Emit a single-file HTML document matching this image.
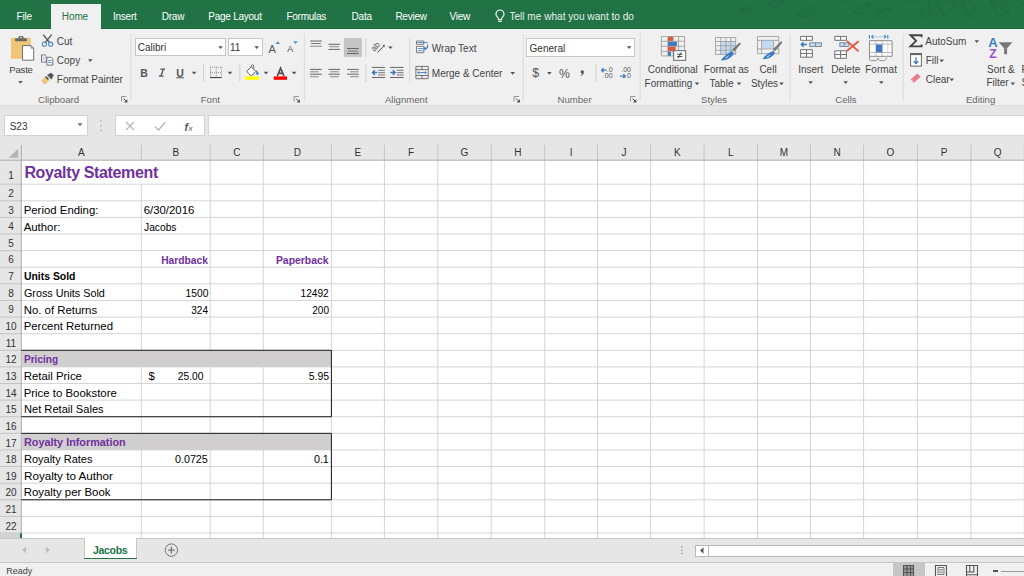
<!DOCTYPE html>
<html><head><meta charset="utf-8"><style>
html,body{margin:0;padding:0;width:1024px;height:576px;overflow:hidden;background:#fff;position:relative;font-family:"Liberation Sans", sans-serif;}
.t{position:absolute;white-space:pre;line-height:normal;font-family:"Liberation Sans", sans-serif;}
svg{overflow:visible;}
</style></head><body>
<div style="position:absolute;left:0.00px;top:0.00px;width:1024.00px;height:29.00px;background:#217346;"></div><div style="position:absolute;left:0.00px;top:28.00px;width:1024.00px;height:1.00px;background:#1a6a3d;"></div><div style="position:absolute;left:51.00px;top:4.00px;width:50.00px;height:25.00px;background:#f0f0f0;"></div><div class="t" style="left:16.60px;top:10.95px;font-size:10px;color:#ffffff;font-weight:400;letter-spacing:-0.25px;">File</div><div class="t" style="left:113.00px;top:10.95px;font-size:10px;color:#ffffff;font-weight:400;letter-spacing:-0.25px;">Insert</div><div class="t" style="left:161.80px;top:10.95px;font-size:10px;color:#ffffff;font-weight:400;letter-spacing:-0.25px;">Draw</div><div class="t" style="left:208.30px;top:10.95px;font-size:10px;color:#ffffff;font-weight:400;letter-spacing:-0.25px;">Page Layout</div><div class="t" style="left:286.40px;top:10.95px;font-size:10px;color:#ffffff;font-weight:400;letter-spacing:-0.25px;">Formulas</div><div class="t" style="left:351.60px;top:10.95px;font-size:10px;color:#ffffff;font-weight:400;letter-spacing:-0.25px;">Data</div><div class="t" style="left:395.40px;top:10.95px;font-size:10px;color:#ffffff;font-weight:400;letter-spacing:-0.25px;">Review</div><div class="t" style="left:449.60px;top:10.95px;font-size:10px;color:#ffffff;font-weight:400;letter-spacing:-0.25px;">View</div><div class="t" style="left:61.80px;top:10.95px;font-size:10px;color:#217346;font-weight:400;letter-spacing:-0.1px;">Home</div><svg style="position:absolute;left:494px;top:9px;" width="12" height="14" viewBox="0 0 12 14"><path d="M6 1a4 4 0 0 0-2.5 7.1c.6.5.9 1.1.9 1.8V10.6h3.2V9.9c0-.7.3-1.3.9-1.8A4 4 0 0 0 6 1z" fill="none" stroke="#e8efe9" stroke-width="1.2"/><path d="M4.2 12.4h3.6" stroke="#e8efe9" stroke-width="1.2"/></svg><div class="t" style="left:509.40px;top:10.86px;font-size:10.1px;color:#e8f0ea;font-weight:400;">Tell me what you want to do</div><svg style="position:absolute;left:700px;top:0px;" width="324" height="28" viewBox="0 0 324 28"><path d="M39.0 10.8 L47.3 6.3 L53.9 7.5 L46.4 13.3 L39.0 10.8 L53.9 7.5" fill="none" stroke="#1c6a3e" stroke-width="0.9" stroke-linejoin="round"/><path d="M67.2 4.2 L72.2 0.0 L85.5 0.8 L74.7 8.3 L67.2 4.2 L85.5 0.8" fill="none" stroke="#1c6a3e" stroke-width="0.9" stroke-linejoin="round"/><path d="M97.1 15.8 L106.2 5.0 L118.7 7.5 L109.6 17.4 L97.1 15.8 L118.7 7.5" fill="none" stroke="#1c6a3e" stroke-width="0.9" stroke-linejoin="round"/><path d="M153.4 12.7 L157.6 6.8 L170.4 3.4 L162.7 13.6 L153.4 12.7 L170.4 3.4" fill="none" stroke="#1c6a3e" stroke-width="0.9" stroke-linejoin="round"/><path d="M174.6 17.0 L177.2 11.0 L191.6 7.6 L185.7 17.8 L174.6 17.0 L191.6 7.6" fill="none" stroke="#1c6a3e" stroke-width="0.9" stroke-linejoin="round"/><path d="M204.4 2.5 L217.1 0.0" fill="none" stroke="#1c6a3e" stroke-width="0.9" stroke-linejoin="round"/><path d="M220.5 10.2 L228.2 0.0 L230.7 15.3 L223.0 17.8 L220.5 10.2 L230.7 15.3" fill="none" stroke="#1c6a3e" stroke-width="0.9" stroke-linejoin="round"/><path d="M235.0 0.0 L256.2 0.0 L252.8 8.5 L244.3 15.3 L238.4 6.8 L235.0 0.0 L244.3 15.3" fill="none" stroke="#1c6a3e" stroke-width="0.9" stroke-linejoin="round"/><path d="M261.3 0.0 L269.0 0.0 L274.9 10.2 L271.5 17.8 L263.9 11.9 L261.3 0.0 L271.5 17.8" fill="none" stroke="#1c6a3e" stroke-width="0.9" stroke-linejoin="round"/><path d="M290.2 0.0 L303.0 0.0 L309.7 14.4 L297.8 15.3 L290.2 0.0 L309.7 14.4" fill="none" stroke="#1c6a3e" stroke-width="0.9" stroke-linejoin="round"/><path d="M315.7 0.0 L324.0 5.0" fill="none" stroke="#1c6a3e" stroke-width="0.9" stroke-linejoin="round"/><path d="M142.0 0.0 L148.0 1.5" fill="none" stroke="#1c6a3e" stroke-width="0.9" stroke-linejoin="round"/></svg><div style="position:absolute;left:0.00px;top:29.00px;width:1024.00px;height:76.00px;background:#f0f0f0;"></div><div style="position:absolute;left:0.00px;top:105.00px;width:1024.00px;height:1.00px;background:#dcdcdc;"></div><div class="t" style="left:58.50px;transform:translateX(-50%);top:93.71px;font-size:9.6px;color:#666666;font-weight:400;">Clipboard</div><div class="t" style="left:210.30px;transform:translateX(-50%);top:93.71px;font-size:9.6px;color:#666666;font-weight:400;">Font</div><div class="t" style="left:406.30px;transform:translateX(-50%);top:93.71px;font-size:9.6px;color:#666666;font-weight:400;">Alignment</div><div class="t" style="left:574.60px;transform:translateX(-50%);top:93.71px;font-size:9.6px;color:#666666;font-weight:400;">Number</div><div class="t" style="left:714.10px;transform:translateX(-50%);top:93.71px;font-size:9.6px;color:#666666;font-weight:400;">Styles</div><div class="t" style="left:846.00px;transform:translateX(-50%);top:93.71px;font-size:9.6px;color:#666666;font-weight:400;">Cells</div><div class="t" style="left:980.60px;transform:translateX(-50%);top:93.71px;font-size:9.6px;color:#666666;font-weight:400;">Editing</div><div class="t" style="left:21.00px;transform:translateX(-50%);top:64.21px;font-size:9.6px;color:#444444;font-weight:400;letter-spacing:-0.2px;">Paste</div><div class="t" style="left:56.80px;top:35.75px;font-size:10px;color:#444444;font-weight:400;">Cut</div><div class="t" style="left:56.80px;top:55.45px;font-size:10px;color:#444444;font-weight:400;">Copy</div><div class="t" style="left:56.80px;top:74.25px;font-size:10px;color:#444444;font-weight:400;">Format Painter</div><div style="position:absolute;left:135.40px;top:38.10px;width:91.00px;height:18.30px;background:#fff;border:1px solid #c6c6c6;box-sizing:border-box;"></div><div style="position:absolute;left:227.80px;top:38.10px;width:35.00px;height:18.30px;background:#fff;border:1px solid #c6c6c6;box-sizing:border-box;"></div><div class="t" style="left:137.80px;top:42.45px;font-size:10px;color:#333;font-weight:400;">Calibri</div><div class="t" style="left:230.00px;top:42.45px;font-size:10px;color:#333;font-weight:400;">11</div><div class="t" style="left:268.50px;top:42.65px;font-size:11px;color:#555;font-weight:400;">A</div><div class="t" style="left:287.20px;top:44.45px;font-size:9px;color:#555;font-weight:400;">A</div><div class="t" style="left:140.30px;top:67.40px;font-size:10.5px;color:#555;font-weight:700;">B</div><div class="t" style="left:176.30px;top:66.80px;font-size:10.5px;color:#555;font-weight:700;">U</div><div class="t" style="left:431.80px;top:42.95px;font-size:10px;color:#444444;font-weight:400;">Wrap Text</div><div class="t" style="left:431.80px;top:68.15px;font-size:10px;color:#444444;font-weight:400;">Merge &amp; Center</div><div style="position:absolute;left:526.40px;top:38.40px;width:109.10px;height:18.40px;background:#fff;border:1px solid #c6c6c6;box-sizing:border-box;"></div><div class="t" style="left:529.60px;top:42.55px;font-size:10px;color:#333;font-weight:400;">General</div><div class="t" style="left:532.20px;top:66.29px;font-size:12.5px;color:#555;font-weight:400;">$</div><div class="t" style="left:558.90px;top:66.76px;font-size:12.2px;color:#555;font-weight:400;">%</div><div class="t" style="left:672.80px;transform:translateX(-50%);top:64.45px;font-size:10px;color:#444444;font-weight:400;">Conditional</div><div class="t" style="left:668.50px;transform:translateX(-50%);top:77.55px;font-size:10px;color:#444444;font-weight:400;">Formatting</div><div class="t" style="left:726.30px;transform:translateX(-50%);top:64.45px;font-size:10px;color:#444444;font-weight:400;">Format as</div><div class="t" style="left:721.50px;transform:translateX(-50%);top:77.55px;font-size:10px;color:#444444;font-weight:400;">Table</div><div class="t" style="left:768.00px;transform:translateX(-50%);top:64.45px;font-size:10px;color:#444444;font-weight:400;">Cell</div><div class="t" style="left:764.50px;transform:translateX(-50%);top:77.55px;font-size:10px;color:#444444;font-weight:400;">Styles</div><div class="t" style="left:810.70px;transform:translateX(-50%);top:64.25px;font-size:10px;color:#444444;font-weight:400;">Insert</div><div class="t" style="left:845.80px;transform:translateX(-50%);top:64.25px;font-size:10px;color:#444444;font-weight:400;">Delete</div><div class="t" style="left:881.10px;transform:translateX(-50%);top:64.25px;font-size:10px;color:#444444;font-weight:400;">Format</div><div class="t" style="left:925.30px;top:35.95px;font-size:10px;color:#444444;font-weight:400;">AutoSum</div><div class="t" style="left:925.70px;top:55.15px;font-size:10px;color:#444444;font-weight:400;">Fill</div><div class="t" style="left:925.70px;top:74.25px;font-size:10px;color:#444444;font-weight:400;">Clear</div><div class="t" style="left:988.30px;top:34.63px;font-size:13px;color:#3c7bc4;font-weight:700;">A</div><div class="t" style="left:989.20px;top:46.56px;font-size:12.2px;color:#9a53c9;font-weight:700;">Z</div><div class="t" style="left:1000.90px;transform:translateX(-50%);top:64.25px;font-size:10px;color:#444444;font-weight:400;">Sort &amp;</div><div class="t" style="left:997.50px;transform:translateX(-50%);top:77.45px;font-size:10px;color:#444444;font-weight:400;">Filter</div><div class="t" style="left:1021.50px;top:64.25px;font-size:10px;color:#444444;font-weight:400;">F</div><div class="t" style="left:1021.50px;top:77.45px;font-size:10px;color:#444444;font-weight:400;">S</div><svg style="position:absolute;left:0px;top:0px;pointer-events:none;" width="1024" height="576" viewBox="0 0 1024 576"><rect x="130.5" y="33.5" width="1" height="67.5" fill="#dadada"/><rect x="303.8" y="33.5" width="1" height="67.5" fill="#dadada"/><rect x="522.7" y="33.5" width="1" height="67.5" fill="#dadada"/><rect x="639.6" y="33.5" width="1" height="67.5" fill="#dadada"/><rect x="789.5" y="33.5" width="1" height="67.5" fill="#dadada"/><rect x="902.7" y="33.5" width="1" height="67.5" fill="#dadada"/><path d="M121.5 101.5V96.5H126.5" fill="none" stroke="#8a8a8a" stroke-width="0.9"/><path d="M123.6 98.6l3 3" stroke="#444" stroke-width="1"/><path d="M127.4 99.2v3.2h-3.2z" fill="#444"/><path d="M294.0 101.5V96.5H299.0" fill="none" stroke="#8a8a8a" stroke-width="0.9"/><path d="M296.1 98.6l3 3" stroke="#444" stroke-width="1"/><path d="M299.9 99.2v3.2h-3.2z" fill="#444"/><path d="M514.0 101.5V96.5H519.0" fill="none" stroke="#8a8a8a" stroke-width="0.9"/><path d="M516.1 98.6l3 3" stroke="#444" stroke-width="1"/><path d="M519.9 99.2v3.2h-3.2z" fill="#444"/><path d="M630.5 101.5V96.5H635.5" fill="none" stroke="#8a8a8a" stroke-width="0.9"/><path d="M632.6 98.6l3 3" stroke="#444" stroke-width="1"/><path d="M636.4 99.2v3.2h-3.2z" fill="#444"/><rect x="10.9" y="37.8" width="19.9" height="21" rx="1" fill="#efc57a"/><rect x="15" y="38.3" width="11.9" height="3" rx="0.8" fill="#6a6a6a"/><rect x="18.6" y="35.9" width="4.9" height="3.4" rx="1.2" fill="#6a6a6a"/><rect x="20.3" y="36.9" width="1.5" height="1.2" fill="#f0f0f0"/><path d="M22.5 45.6h8.6l2.6 2.6v12h-11.2z" fill="#fff" stroke="#6f6f6f" stroke-width="1"/><path d="M31.1 45.6v2.6h2.6" fill="none" stroke="#6f6f6f" stroke-width="0.8"/><path d="M18.2 81.1h4.6l-2.3 2.6z" fill="#555"/><path d="M43.2 34.6L49.6 42.6M51.6 34.6L45.2 42.6" stroke="#555" stroke-width="1.4" fill="none"/><circle cx="44.4" cy="44.2" r="2.1" fill="none" stroke="#4f8cc9" stroke-width="1.1"/><circle cx="50.7" cy="44.2" r="2.1" fill="none" stroke="#4f8cc9" stroke-width="1.1"/><path d="M41.5 54.9h3.6l1 1v6.2h-4.6z" fill="#fff" stroke="#666" stroke-width="0.9"/><path d="M46.9 57.3h4.3l1.7 1.7v6.1h-6z" fill="#fff" stroke="#666" stroke-width="0.9"/><path d="M42.6 57.2h1.6M42.6 59.2h1.6" stroke="#4f8cc9" stroke-width="0.9"/><path d="M48 60.4h3.6M48 62.4h3.6" stroke="#4f8cc9" stroke-width="0.9"/><path d="M88.0 59.3h4.6l-2.3 2.6z" fill="#555"/><path d="M41 80.8l4.9-4.6 3.6 3.7-4.6 4.8z" fill="#efc57a"/><path d="M47 75l4.2-2.3 2.6 2.6-2.4 4.2z" fill="#555"/><path d="M45.6 76.6l2.8 2.8" stroke="#555" stroke-width="1.6"/><path d="M218.29999999999998 46.3h4.6l-2.3 2.6z" fill="#555"/><path d="M254.39999999999998 46.3h4.6l-2.3 2.6z" fill="#555"/><path d="M275.5 44l2.3-2.8 2.3 2.8z" fill="#4f8cc9"/><path d="M293.2 41.2h4.6l-2.3 2.8z" fill="#4f8cc9"/><path d="M160.3 69.2h4.8M158.8 76.2h4.8M163.3 69.2l-2.4 7" fill="none" stroke="#555" stroke-width="1.3"/><rect x="176.3" y="77.3" width="7.6" height="1" fill="#555"/><path d="M191.79999999999998 71.8h4.6l-2.3 2.6z" fill="#555"/><rect x="203.2" y="64" width="1" height="17.599999999999994" fill="#d0d0d0"/><rect x="210" y="66.8" width="1" height="0.9" fill="#8a8a8a"/><rect x="212" y="66.8" width="1" height="0.9" fill="#8a8a8a"/><rect x="214" y="66.8" width="1" height="0.9" fill="#8a8a8a"/><rect x="216" y="66.8" width="1" height="0.9" fill="#8a8a8a"/><rect x="218" y="66.8" width="1" height="0.9" fill="#8a8a8a"/><rect x="220" y="66.8" width="1" height="0.9" fill="#8a8a8a"/><rect x="210" y="72.2" width="1" height="0.9" fill="#8a8a8a"/><rect x="212" y="72.2" width="1" height="0.9" fill="#8a8a8a"/><rect x="214" y="72.2" width="1" height="0.9" fill="#8a8a8a"/><rect x="216" y="72.2" width="1" height="0.9" fill="#8a8a8a"/><rect x="218" y="72.2" width="1" height="0.9" fill="#8a8a8a"/><rect x="220" y="72.2" width="1" height="0.9" fill="#8a8a8a"/><rect x="210" y="66.8" width="0.9" height="1" fill="#8a8a8a"/><rect x="210" y="68.8" width="0.9" height="1" fill="#8a8a8a"/><rect x="210" y="70.8" width="0.9" height="1" fill="#8a8a8a"/><rect x="210" y="72.8" width="0.9" height="1" fill="#8a8a8a"/><rect x="210" y="74.8" width="0.9" height="1" fill="#8a8a8a"/><rect x="210" y="76.8" width="0.9" height="1" fill="#8a8a8a"/><rect x="215.7" y="66.8" width="0.9" height="1" fill="#8a8a8a"/><rect x="215.7" y="68.8" width="0.9" height="1" fill="#8a8a8a"/><rect x="215.7" y="70.8" width="0.9" height="1" fill="#8a8a8a"/><rect x="215.7" y="72.8" width="0.9" height="1" fill="#8a8a8a"/><rect x="215.7" y="74.8" width="0.9" height="1" fill="#8a8a8a"/><rect x="215.7" y="76.8" width="0.9" height="1" fill="#8a8a8a"/><rect x="221" y="66.8" width="0.9" height="1" fill="#8a8a8a"/><rect x="221" y="68.8" width="0.9" height="1" fill="#8a8a8a"/><rect x="221" y="70.8" width="0.9" height="1" fill="#8a8a8a"/><rect x="221" y="72.8" width="0.9" height="1" fill="#8a8a8a"/><rect x="221" y="74.8" width="0.9" height="1" fill="#8a8a8a"/><rect x="221" y="76.8" width="0.9" height="1" fill="#8a8a8a"/><rect x="210" y="77" width="11.5" height="1.1" fill="#444"/><path d="M227.7 71.8h4.6l-2.3 2.6z" fill="#555"/><rect x="239.4" y="64.4" width="1" height="17.099999999999994" fill="#d0d0d0"/><path d="M251.3 66.8l4.6 4.6-4.6 4.6-4.6-4.6z" fill="#fff" stroke="#555" stroke-width="1"/><path d="M251.3 66.8v-0.8a1.2 1.2 0 0 1 2.4 0v3" fill="none" stroke="#555" stroke-width="0.8"/><path d="M256 70.2c1.6 1 2.8 2.4 2.6 3.6-.2 1.2-1.4 1.6-2.2.8z" fill="#3c7bc4"/><rect x="245" y="76.4" width="13.9" height="3.4" fill="#ffff00"/><path d="M263.7 71.8h4.6l-2.3 2.6z" fill="#555"/><path d="M277.3 76L280.6 68.2L283.9 76M278.5 73.4h4.2" fill="none" stroke="#505050" stroke-width="1.7"/><rect x="273.8" y="76.4" width="13.2" height="3.4" fill="#ff0000"/><path d="M291.8 71.8h4.6l-2.3 2.6z" fill="#555"/><rect x="310.1" y="40.5" width="11.699999999999989" height="1" fill="#666"/><rect x="311.1" y="43.0" width="9.699999999999989" height="1" fill="#777"/><rect x="310.1" y="45.7" width="11.699999999999989" height="1" fill="#888"/><rect x="328.5" y="43.8" width="11.5" height="1" fill="#666"/><rect x="329.5" y="46.2" width="9.5" height="1" fill="#888"/><rect x="328.5" y="48.9" width="11.5" height="1" fill="#666"/><rect x="343.9" y="38.1" width="18" height="18.8" fill="#c5c5c5"/><rect x="347" y="48.0" width="11.699999999999989" height="1" fill="#666"/><rect x="348" y="50.6" width="9.699999999999989" height="1" fill="#777"/><rect x="347" y="53.0" width="11.699999999999989" height="1" fill="#666"/><rect x="365.4" y="38.1" width="1" height="18.799999999999997" fill="#d0d0d0"/><text x="0" y="0" font-family="Liberation Sans" font-size="8.5" fill="#555" transform="translate(374.5 52) rotate(-50)">ab</text><path d="M377.5 52.4L384 45.9" stroke="#555" stroke-width="1"/><path d="M385 44.8l-2.6.8 1.8 1.8z" fill="#555"/><path d="M388.09999999999997 46.4h4.6l-2.3 2.6z" fill="#555"/><rect x="310.1" y="68.9" width="11.699999999999989" height="1" fill="#666"/><rect x="310.1" y="71.3" width="8.599999999999966" height="1" fill="#888"/><rect x="310.1" y="73.7" width="11.699999999999989" height="1" fill="#666"/><rect x="310.1" y="76.2" width="8.599999999999966" height="1" fill="#888"/><rect x="328.5" y="68.9" width="11.5" height="1" fill="#666"/><rect x="330" y="71.3" width="8.800000000000011" height="1" fill="#888"/><rect x="328.5" y="73.7" width="11.5" height="1" fill="#666"/><rect x="330" y="76.2" width="8.800000000000011" height="1" fill="#888"/><rect x="347" y="68.9" width="11.699999999999989" height="1" fill="#666"/><rect x="350" y="71.3" width="8.699999999999989" height="1" fill="#888"/><rect x="347" y="73.7" width="11.699999999999989" height="1" fill="#666"/><rect x="350" y="76.2" width="8.699999999999989" height="1" fill="#888"/><rect x="365.4" y="64.3" width="1" height="17.60000000000001" fill="#d0d0d0"/><rect x="371.9" y="66.9" width="13.100000000000023" height="1" fill="#666"/><rect x="378.2" y="69.8" width="6.800000000000011" height="1" fill="#777"/><rect x="378.2" y="72.2" width="6.800000000000011" height="1" fill="#777"/><rect x="378.2" y="74.5" width="6.800000000000011" height="1" fill="#777"/><rect x="371.9" y="77.0" width="13.100000000000023" height="1" fill="#666"/><path d="M372.5 72.6h4.6M374.8 70.3l-2.3 2.3 2.3 2.3" fill="none" stroke="#3c7bc4" stroke-width="1.5"/><rect x="390" y="66.9" width="13.600000000000023" height="1" fill="#666"/><rect x="396.7" y="69.8" width="6.900000000000034" height="1" fill="#777"/><rect x="396.7" y="72.2" width="6.900000000000034" height="1" fill="#777"/><rect x="396.7" y="74.5" width="6.900000000000034" height="1" fill="#777"/><rect x="390" y="77.0" width="13.600000000000023" height="1" fill="#666"/><path d="M390.3 72.6h4.6M392.8 70.3l2.3 2.3-2.3 2.3" fill="none" stroke="#3c7bc4" stroke-width="1.5"/><rect x="409.2" y="38" width="1" height="44.599999999999994" fill="#d6d6d6"/><path d="M416.5 41h7.3v3.3h-7.3zM416.5 46.4h7.3v6.3h-7.3z" fill="#fff" stroke="#707070" stroke-width="0.9"/><path d="M417.3 42.6h10.4M417.8 48.6h5M417.8 50.8h5" stroke="#3c7bc4" stroke-width="0.9"/><path d="M427.6 44.6v1.6c0 1.6-1 2.4-2.4 2.4h-0.8M425.6 47.2l-1.6 1.4 1.6 1.4" fill="none" stroke="#3c7bc4" stroke-width="1.1"/><path d="M415.9 66.4h12.3v12.3h-12.3zM415.9 69.6h12.3M415.9 75.5h12.3M422 66.4v3.2M422 75.5v3.2" fill="none" stroke="#666" stroke-width="0.9"/><path d="M417.8 72.6h8.5M419.2 71.2l-1.4 1.4 1.4 1.4M424.9 71.2l1.4 1.4-1.4 1.4" fill="none" stroke="#3c7bc4" stroke-width="0.9"/><path d="M510.40000000000003 72.1h4.6l-2.3 2.6z" fill="#555"/><path d="M626.9000000000001 46.3h4.6l-2.3 2.6z" fill="#555"/><path d="M547.1 72.1h4.6l-2.3 2.6z" fill="#555"/><path d="M582.2 70.2a1.7 1.7 0 0 1 1.7 1.9c-.1 1.8-1.2 3.2-3 4l-.4-.6c.9-.6 1.5-1.3 1.6-2.1a1.6 1.6 0 0 1 .1-3.2z" fill="#555"/><rect x="595.6" y="64" width="1" height="18" fill="#d0d0d0"/><path d="M601.6 70.2h5M603.6 68.2l-2 2 2 2" fill="none" stroke="#3c7bc4" stroke-width="1.3"/><text x="606.8" y="72" font-family="Liberation Sans" font-size="7" fill="#555">.0</text><text x="602.8" y="78" font-family="Liberation Sans" font-size="7" fill="#555">.00</text><text x="621.2" y="72" font-family="Liberation Sans" font-size="7" fill="#555">.00</text><text x="625.1" y="78" font-family="Liberation Sans" font-size="7" fill="#555">.0</text><path d="M620 76.1h5M623.2 74.1l2 2-2 2" fill="none" stroke="#3c7bc4" stroke-width="1.3"/><rect x="668" y="36.6" width="4.8" height="4" fill="#e0573a"/><rect x="668" y="41.9" width="8.8" height="3.9" fill="#3c7bc4"/><rect x="668" y="46.8" width="7.4" height="3.9" fill="#e0573a"/><rect x="668" y="51.8" width="2.8" height="3.9" fill="#3c7bc4"/><path d="M661.4 36.5h23.2v19.4h-23.2zM661.4 41.3h23.2M661.4 46.3h23.2M661.4 51.3h23.2M667.9 36.5v19.4M673.2 36.5v19.4M678.5 36.5v19.4" fill="none" stroke="#a0a0a0" stroke-width="0.9"/><rect x="668" y="36.9" width="4.8" height="3.9" fill="#e0573a"/><rect x="668" y="41.8" width="8.8" height="4" fill="#3c7bc4"/><rect x="668" y="46.8" width="7.4" height="4" fill="#e0573a"/><rect x="668" y="51.8" width="2.8" height="3.8" fill="#3c7bc4"/><rect x="673.7" y="50.7" width="12" height="9.6" fill="#fff" stroke="#666" stroke-width="1"/><path d="M677 54.2h5.4M677 56.6h5.4M681.2 52.6l-3 5.6" stroke="#333" stroke-width="0.9"/><path d="M694.7 82.6h4.6l-2.3 2.6z" fill="#555"/><rect x="720.7" y="41.5" width="15" height="12.9" fill="#c5d9f0"/><path d="M715.5 37.5h20.2v16.9h-20.2zM715.5 41.5h20.2M715.5 45.8h20.2M715.5 50.2h20.2M720.7 37.5v16.9M725.9 37.5v16.9M730.8 37.5v16.9" fill="none" stroke="#a0a0a0" stroke-width="0.9"/><path d="M739.6 42.4l1.4 1.4-6.8 7.6-2-2z" fill="#777"/><path d="M732 51.2c-3 1-8 4.5-11.2 9.3 4.5.4 10.2-1.6 13-6.9z" fill="#3c7bc4"/><path d="M728.6 55.6c-.8 1.2-1.8 2-3 2.4" stroke="#fff" stroke-width="0.8" fill="none"/><path d="M736.7 82.6h4.6l-2.3 2.6z" fill="#555"/><rect x="761.8" y="40.6" width="11.2" height="7.9" fill="#c5d9f0"/><path d="M757.5 36.5h21.3v17.1h-21.3zM757.5 40.4h21.3M757.5 48.9h21.3M761.6 40.4v13.2M773.6 40.4v13.2" fill="none" stroke="#a0a0a0" stroke-width="0.9"/><path d="M781 41.2l1.4 1.4-7.4 8.6-2-2z" fill="#777"/><path d="M773.2 51c-3 1-7.6 3.6-10.8 8 4.5.4 9.8-1.2 12.6-6z" fill="#3c7bc4"/><path d="M770 54.8c-.8 1.2-1.8 2-3 2.4" stroke="#fff" stroke-width="0.8" fill="none"/><path d="M779.2 82.6h4.6l-2.3 2.6z" fill="#555"/><path d="M800.6 36.4h11.799999999999955v3.8999999999999986h-11.799999999999955zM806.5 36.4v3.8999999999999986" fill="#fff" stroke="#707070" stroke-width="1"/><path d="M809.7 42.8h11.699999999999932v3.700000000000003h-11.699999999999932zM815.55 42.8v3.700000000000003" fill="#c5d9f0" stroke="#7a8a9a" stroke-width="1"/><path d="M801.4 44.6h5.6M803.6 42.4l-2.2 2.2 2.2 2.2" fill="none" stroke="#3c7bc4" stroke-width="1.5"/><path d="M800.6 49.7h11.799999999999955v7.5h-11.799999999999955zM806.5 49.7v7.5M800.6 53.45h11.799999999999955" fill="#fff" stroke="#707070" stroke-width="1"/><path d="M808.4000000000001 81.3h4.6l-2.3 2.6z" fill="#555"/><path d="M834.8 36.4h11.600000000000023v3.8999999999999986h-11.600000000000023zM840.5999999999999 36.4v3.8999999999999986" fill="#fff" stroke="#707070" stroke-width="1"/><path d="M839.8 42.8h9v3.7h-9zM844.3 42.8v3.7" fill="#c5d9f0" stroke="#7a8a9a" stroke-width="1"/><path d="M834.8 50.8h11.600000000000023v7.5h-11.600000000000023zM840.5999999999999 50.8v7.5M834.8 54.55h11.600000000000023" fill="#fff" stroke="#707070" stroke-width="1"/><path d="M846.8 40.8l11.8 10.6M858.6 41.2l-11.8 9.8" stroke="#e0573a" stroke-width="1.8"/><path d="M843.4000000000001 81.3h4.6l-2.3 2.6z" fill="#555"/><path d="M869.4 35v3.7M887.8 35v3.7" stroke="#3c7bc4" stroke-width="1"/><path d="M871.5 36.8h14.5" stroke="#a9c4e4" stroke-width="1"/><path d="M873.4 35.2l-1.6 1.6 1.6 1.6M884.2 35.2l1.6 1.6-1.6 1.6" fill="none" stroke="#3c7bc4" stroke-width="1.1"/><path d="M869.5 40.7h22.6v15.6h-22.6z" fill="#fff" stroke="#8a8a8a" stroke-width="1"/><path d="M869.5 44.1h22.6M869.5 52.5h22.6M876 40.7v15.6M882.2 40.7v15.6" stroke="#b0b0b0" stroke-width="0.9"/><path d="M887.8 40.7v15.6" stroke="#d0d0d0" stroke-width="0.9"/><rect x="876" y="44.5" width="6.2" height="7.8" fill="#3c7bc4"/><path d="M869.5 56.3v3c0 1 1 1.3 2 1.3h4.5c1 0 1.5-1 2-2.5M878 58c.5 1.5 1 2.6 2 2.6h4.5c1 0 1.5-1 2-2.8" fill="none" stroke="#8a8a8a" stroke-width="0.9"/><path d="M879.0 81.3h4.6l-2.3 2.6z" fill="#555"/><path d="M921.6 37.2V35.2H910.5l5.6 5.6-5.6 5.6h11.1v-2" fill="none" stroke="#444" stroke-width="1.9" stroke-linejoin="miter"/><path d="M974.5 40.3h4.6l-2.3 2.6z" fill="#555"/><rect x="910.6" y="53.6" width="10.8" height="12.5" fill="#fff" stroke="#666" stroke-width="1"/><rect x="910.1" y="53.1" width="11.8" height="2" fill="#666"/><path d="M916 57.3v6.3M913.7 61.2l2.3 2.4 2.3-2.4" fill="none" stroke="#3c7bc4" stroke-width="1.3"/><path d="M939.4000000000001 59.599999999999994h4.6l-2.3 2.6z" fill="#555"/><path d="M910.6 79.4l6.6-6 3.4 3.3-6.6 6z" fill="#e57c8f"/><path d="M912.4 81.2l1.6-1.5" stroke="#f6d3da" stroke-width="1"/><path d="M949.5 78.6h4.6l-2.3 2.6z" fill="#555"/><path d="M998.7 42.3h13.7l-5.3 6v6h-3v-6z" fill="#777"/><path d="M1010.5 82.6h4.6l-2.3 2.6z" fill="#555"/></svg><div style="position:absolute;left:0.00px;top:106.00px;width:1024.00px;height:38.80px;background:#e6e6e6;"></div><div style="position:absolute;left:4.30px;top:115.40px;width:84.20px;height:20.40px;background:#fff;border:1px solid #d2d2d2;box-sizing:border-box;"></div><div class="t" style="left:9.70px;top:121.45px;font-size:10px;color:#333;font-weight:400;">S23</div><svg style="position:absolute;left:77px;top:123px;" width="6" height="4" viewBox="0 0 6 4"><path d="M0.5 0.3h5l-2.5 2.8z" fill="#666"/></svg><svg style="position:absolute;left:100px;top:119.5px;" width="3" height="13" viewBox="0 0 3 13"><rect x="0.5" y="0.5" width="1.2" height="1.2" fill="#999"/><rect x="0.5" y="5.2" width="1.2" height="1.2" fill="#999"/><rect x="0.5" y="9.9" width="1.2" height="1.2" fill="#999"/></svg><div style="position:absolute;left:114.50px;top:115.40px;width:90.70px;height:20.40px;background:#fff;border:1px solid #d2d2d2;box-sizing:border-box;"></div><svg style="position:absolute;left:125px;top:120.5px;" width="10" height="10" viewBox="0 0 10 10"><path d="M1 1l8 8M9 1l-8 8" stroke="#b3b3b3" stroke-width="1.1"/></svg><svg style="position:absolute;left:154px;top:120.5px;" width="12" height="10" viewBox="0 0 12 10"><path d="M1 5.5l3.5 3.5L11 1.5" fill="none" stroke="#b3b3b3" stroke-width="1.2"/></svg><div class="t" style="left:184.50px;top:120.50px;font-size:10.5px;color:#555;font-weight:700;font-style:italic;font-family:"Liberation Serif",serif;">f</div><div class="t" style="left:188.50px;top:123.76px;font-size:8px;color:#555;font-weight:400;font-style:italic;font-family:"Liberation Serif",serif;">x</div><div style="position:absolute;left:208.40px;top:115.40px;width:830.00px;height:20.40px;background:#fff;border:1px solid #d6d6d6;box-sizing:border-box;"></div><div style="position:absolute;left:0.00px;top:144.80px;width:1024.00px;height:15.40px;background:#e6e6e6;"></div><div style="position:absolute;left:0.00px;top:160.20px;width:21.30px;height:378.30px;background:#e6e6e6;"></div><div style="position:absolute;left:21.30px;top:160.20px;width:1002.70px;height:378.30px;background:#fff;"></div><svg style="position:absolute;left:0px;top:0px;pointer-events:none;" width="1024" height="576" viewBox="0 0 1024 576"><line x1="141.3" y1="184.2" x2="141.3" y2="538.5" stroke="#d5d5d5" stroke-width="1"/><line x1="210.2" y1="160.2" x2="210.2" y2="538.5" stroke="#d5d5d5" stroke-width="1"/><line x1="263.3" y1="160.2" x2="263.3" y2="538.5" stroke="#d5d5d5" stroke-width="1"/><line x1="331.4" y1="160.2" x2="331.4" y2="538.5" stroke="#d5d5d5" stroke-width="1"/><line x1="384.4" y1="160.2" x2="384.4" y2="538.5" stroke="#d5d5d5" stroke-width="1"/><line x1="437.8" y1="160.2" x2="437.8" y2="538.5" stroke="#d5d5d5" stroke-width="1"/><line x1="491.2" y1="160.2" x2="491.2" y2="538.5" stroke="#d5d5d5" stroke-width="1"/><line x1="544.7" y1="160.2" x2="544.7" y2="538.5" stroke="#d5d5d5" stroke-width="1"/><line x1="597.5" y1="160.2" x2="597.5" y2="538.5" stroke="#d5d5d5" stroke-width="1"/><line x1="650.6" y1="160.2" x2="650.6" y2="538.5" stroke="#d5d5d5" stroke-width="1"/><line x1="704.1" y1="160.2" x2="704.1" y2="538.5" stroke="#d5d5d5" stroke-width="1"/><line x1="757.6" y1="160.2" x2="757.6" y2="538.5" stroke="#d5d5d5" stroke-width="1"/><line x1="810.4" y1="160.2" x2="810.4" y2="538.5" stroke="#d5d5d5" stroke-width="1"/><line x1="863.6" y1="160.2" x2="863.6" y2="538.5" stroke="#d5d5d5" stroke-width="1"/><line x1="917.4" y1="160.2" x2="917.4" y2="538.5" stroke="#d5d5d5" stroke-width="1"/><line x1="970.9" y1="160.2" x2="970.9" y2="538.5" stroke="#d5d5d5" stroke-width="1"/><line x1="1024.3" y1="160.2" x2="1024.3" y2="538.5" stroke="#d5d5d5" stroke-width="1"/><line x1="21.3" y1="184.2" x2="1024" y2="184.2" stroke="#d5d5d5" stroke-width="1"/><line x1="21.3" y1="200.81" x2="1024" y2="200.81" stroke="#d5d5d5" stroke-width="1"/><line x1="21.3" y1="217.42" x2="1024" y2="217.42" stroke="#d5d5d5" stroke-width="1"/><line x1="21.3" y1="234.02999999999997" x2="1024" y2="234.02999999999997" stroke="#d5d5d5" stroke-width="1"/><line x1="21.3" y1="250.64" x2="1024" y2="250.64" stroke="#d5d5d5" stroke-width="1"/><line x1="21.3" y1="267.25" x2="1024" y2="267.25" stroke="#d5d5d5" stroke-width="1"/><line x1="21.3" y1="283.86" x2="1024" y2="283.86" stroke="#d5d5d5" stroke-width="1"/><line x1="21.3" y1="300.46999999999997" x2="1024" y2="300.46999999999997" stroke="#d5d5d5" stroke-width="1"/><line x1="21.3" y1="317.08" x2="1024" y2="317.08" stroke="#d5d5d5" stroke-width="1"/><line x1="21.3" y1="333.69" x2="1024" y2="333.69" stroke="#d5d5d5" stroke-width="1"/><line x1="21.3" y1="350.29999999999995" x2="1024" y2="350.29999999999995" stroke="#d5d5d5" stroke-width="1"/><line x1="21.3" y1="366.90999999999997" x2="1024" y2="366.90999999999997" stroke="#d5d5d5" stroke-width="1"/><line x1="21.3" y1="383.52" x2="1024" y2="383.52" stroke="#d5d5d5" stroke-width="1"/><line x1="21.3" y1="400.13" x2="1024" y2="400.13" stroke="#d5d5d5" stroke-width="1"/><line x1="21.3" y1="416.74" x2="1024" y2="416.74" stroke="#d5d5d5" stroke-width="1"/><line x1="21.3" y1="433.34999999999997" x2="1024" y2="433.34999999999997" stroke="#d5d5d5" stroke-width="1"/><line x1="21.3" y1="449.96" x2="1024" y2="449.96" stroke="#d5d5d5" stroke-width="1"/><line x1="21.3" y1="466.57" x2="1024" y2="466.57" stroke="#d5d5d5" stroke-width="1"/><line x1="21.3" y1="483.18" x2="1024" y2="483.18" stroke="#d5d5d5" stroke-width="1"/><line x1="21.3" y1="499.78999999999996" x2="1024" y2="499.78999999999996" stroke="#d5d5d5" stroke-width="1"/><line x1="21.3" y1="516.4" x2="1024" y2="516.4" stroke="#d5d5d5" stroke-width="1"/><line x1="21.3" y1="533.01" x2="1024" y2="533.01" stroke="#d5d5d5" stroke-width="1"/><line x1="141.3" y1="144.8" x2="141.3" y2="160.2" stroke="#c4c4c4" stroke-width="1"/><line x1="210.2" y1="144.8" x2="210.2" y2="160.2" stroke="#c4c4c4" stroke-width="1"/><line x1="263.3" y1="144.8" x2="263.3" y2="160.2" stroke="#c4c4c4" stroke-width="1"/><line x1="331.4" y1="144.8" x2="331.4" y2="160.2" stroke="#c4c4c4" stroke-width="1"/><line x1="384.4" y1="144.8" x2="384.4" y2="160.2" stroke="#c4c4c4" stroke-width="1"/><line x1="437.8" y1="144.8" x2="437.8" y2="160.2" stroke="#c4c4c4" stroke-width="1"/><line x1="491.2" y1="144.8" x2="491.2" y2="160.2" stroke="#c4c4c4" stroke-width="1"/><line x1="544.7" y1="144.8" x2="544.7" y2="160.2" stroke="#c4c4c4" stroke-width="1"/><line x1="597.5" y1="144.8" x2="597.5" y2="160.2" stroke="#c4c4c4" stroke-width="1"/><line x1="650.6" y1="144.8" x2="650.6" y2="160.2" stroke="#c4c4c4" stroke-width="1"/><line x1="704.1" y1="144.8" x2="704.1" y2="160.2" stroke="#c4c4c4" stroke-width="1"/><line x1="757.6" y1="144.8" x2="757.6" y2="160.2" stroke="#c4c4c4" stroke-width="1"/><line x1="810.4" y1="144.8" x2="810.4" y2="160.2" stroke="#c4c4c4" stroke-width="1"/><line x1="863.6" y1="144.8" x2="863.6" y2="160.2" stroke="#c4c4c4" stroke-width="1"/><line x1="917.4" y1="144.8" x2="917.4" y2="160.2" stroke="#c4c4c4" stroke-width="1"/><line x1="970.9" y1="144.8" x2="970.9" y2="160.2" stroke="#c4c4c4" stroke-width="1"/><line x1="1024.3" y1="144.8" x2="1024.3" y2="160.2" stroke="#c4c4c4" stroke-width="1"/><line x1="0" y1="184.2" x2="21.3" y2="184.2" stroke="#c4c4c4" stroke-width="1"/><line x1="0" y1="200.81" x2="21.3" y2="200.81" stroke="#c4c4c4" stroke-width="1"/><line x1="0" y1="217.42" x2="21.3" y2="217.42" stroke="#c4c4c4" stroke-width="1"/><line x1="0" y1="234.02999999999997" x2="21.3" y2="234.02999999999997" stroke="#c4c4c4" stroke-width="1"/><line x1="0" y1="250.64" x2="21.3" y2="250.64" stroke="#c4c4c4" stroke-width="1"/><line x1="0" y1="267.25" x2="21.3" y2="267.25" stroke="#c4c4c4" stroke-width="1"/><line x1="0" y1="283.86" x2="21.3" y2="283.86" stroke="#c4c4c4" stroke-width="1"/><line x1="0" y1="300.46999999999997" x2="21.3" y2="300.46999999999997" stroke="#c4c4c4" stroke-width="1"/><line x1="0" y1="317.08" x2="21.3" y2="317.08" stroke="#c4c4c4" stroke-width="1"/><line x1="0" y1="333.69" x2="21.3" y2="333.69" stroke="#c4c4c4" stroke-width="1"/><line x1="0" y1="350.29999999999995" x2="21.3" y2="350.29999999999995" stroke="#c4c4c4" stroke-width="1"/><line x1="0" y1="366.90999999999997" x2="21.3" y2="366.90999999999997" stroke="#c4c4c4" stroke-width="1"/><line x1="0" y1="383.52" x2="21.3" y2="383.52" stroke="#c4c4c4" stroke-width="1"/><line x1="0" y1="400.13" x2="21.3" y2="400.13" stroke="#c4c4c4" stroke-width="1"/><line x1="0" y1="416.74" x2="21.3" y2="416.74" stroke="#c4c4c4" stroke-width="1"/><line x1="0" y1="433.34999999999997" x2="21.3" y2="433.34999999999997" stroke="#c4c4c4" stroke-width="1"/><line x1="0" y1="449.96" x2="21.3" y2="449.96" stroke="#c4c4c4" stroke-width="1"/><line x1="0" y1="466.57" x2="21.3" y2="466.57" stroke="#c4c4c4" stroke-width="1"/><line x1="0" y1="483.18" x2="21.3" y2="483.18" stroke="#c4c4c4" stroke-width="1"/><line x1="0" y1="499.78999999999996" x2="21.3" y2="499.78999999999996" stroke="#c4c4c4" stroke-width="1"/><line x1="0" y1="516.4" x2="21.3" y2="516.4" stroke="#c4c4c4" stroke-width="1"/><line x1="0" y1="533.01" x2="21.3" y2="533.01" stroke="#c4c4c4" stroke-width="1"/><line x1="0" y1="160.2" x2="1024" y2="160.2" stroke="#ababab" stroke-width="1"/><line x1="21.3" y1="144.8" x2="21.3" y2="538.5" stroke="#ababab" stroke-width="1"/><path d="M8.6 157.7L18.3 148.7V157.7z" fill="#b4b4b4"/><rect x="21.8" y="350.79999999999995" width="309.09999999999997" height="16.110000000000014" fill="#d0cece"/><rect x="21.8" y="433.84999999999997" width="309.09999999999997" height="16.110000000000014" fill="#d0cece"/><path d="M21.3 350.29999999999995H331.4V416.74H21.3" fill="none" stroke="#1a1a1a" stroke-width="1"/><path d="M21.3 433.34999999999997H331.4V499.78999999999996H21.3" fill="none" stroke="#1a1a1a" stroke-width="1"/><rect x="0" y="533.51" width="20" height="4.990000000000009" fill="#d2d2d2"/><rect x="20" y="533.31" width="2" height="5.190000000000009" fill="#217346"/></svg><div class="t" style="left:81.30px;transform:translateX(-50%);top:146.95px;font-size:10px;color:#333;font-weight:400;">A</div><div class="t" style="left:175.75px;transform:translateX(-50%);top:146.95px;font-size:10px;color:#333;font-weight:400;">B</div><div class="t" style="left:236.75px;transform:translateX(-50%);top:146.95px;font-size:10px;color:#333;font-weight:400;">C</div><div class="t" style="left:297.35px;transform:translateX(-50%);top:146.95px;font-size:10px;color:#333;font-weight:400;">D</div><div class="t" style="left:357.90px;transform:translateX(-50%);top:146.95px;font-size:10px;color:#333;font-weight:400;">E</div><div class="t" style="left:411.10px;transform:translateX(-50%);top:146.95px;font-size:10px;color:#333;font-weight:400;">F</div><div class="t" style="left:464.50px;transform:translateX(-50%);top:146.95px;font-size:10px;color:#333;font-weight:400;">G</div><div class="t" style="left:517.95px;transform:translateX(-50%);top:146.95px;font-size:10px;color:#333;font-weight:400;">H</div><div class="t" style="left:571.10px;transform:translateX(-50%);top:146.95px;font-size:10px;color:#333;font-weight:400;">I</div><div class="t" style="left:624.05px;transform:translateX(-50%);top:146.95px;font-size:10px;color:#333;font-weight:400;">J</div><div class="t" style="left:677.35px;transform:translateX(-50%);top:146.95px;font-size:10px;color:#333;font-weight:400;">K</div><div class="t" style="left:730.85px;transform:translateX(-50%);top:146.95px;font-size:10px;color:#333;font-weight:400;">L</div><div class="t" style="left:784.00px;transform:translateX(-50%);top:146.95px;font-size:10px;color:#333;font-weight:400;">M</div><div class="t" style="left:837.00px;transform:translateX(-50%);top:146.95px;font-size:10px;color:#333;font-weight:400;">N</div><div class="t" style="left:890.50px;transform:translateX(-50%);top:146.95px;font-size:10px;color:#333;font-weight:400;">O</div><div class="t" style="left:944.15px;transform:translateX(-50%);top:146.95px;font-size:10px;color:#333;font-weight:400;">P</div><div class="t" style="left:997.60px;transform:translateX(-50%);top:146.95px;font-size:10px;color:#333;font-weight:400;">Q</div><div class="t" style="left:11.00px;transform:translateX(-50%);top:169.55px;font-size:10px;color:#333;font-weight:400;">1</div><div class="t" style="left:11.00px;transform:translateX(-50%);top:188.00px;font-size:10px;color:#333;font-weight:400;">2</div><div class="t" style="left:11.00px;transform:translateX(-50%);top:205.00px;font-size:10px;color:#333;font-weight:400;">3</div><div class="t" style="left:11.00px;transform:translateX(-50%);top:221.00px;font-size:10px;color:#333;font-weight:400;">4</div><div class="t" style="left:11.00px;transform:translateX(-50%);top:238.00px;font-size:10px;color:#333;font-weight:400;">5</div><div class="t" style="left:11.00px;transform:translateX(-50%);top:254.00px;font-size:10px;color:#333;font-weight:400;">6</div><div class="t" style="left:11.00px;transform:translateX(-50%);top:271.00px;font-size:10px;color:#333;font-weight:400;">7</div><div class="t" style="left:11.00px;transform:translateX(-50%);top:288.00px;font-size:10px;color:#333;font-weight:400;">8</div><div class="t" style="left:11.00px;transform:translateX(-50%);top:304.00px;font-size:10px;color:#333;font-weight:400;">9</div><div class="t" style="left:11.00px;transform:translateX(-50%);top:321.00px;font-size:10px;color:#333;font-weight:400;">10</div><div class="t" style="left:11.00px;transform:translateX(-50%);top:338.00px;font-size:10px;color:#333;font-weight:400;">11</div><div class="t" style="left:11.00px;transform:translateX(-50%);top:354.00px;font-size:10px;color:#333;font-weight:400;">12</div><div class="t" style="left:11.00px;transform:translateX(-50%);top:371.00px;font-size:10px;color:#333;font-weight:400;">13</div><div class="t" style="left:11.00px;transform:translateX(-50%);top:388.00px;font-size:10px;color:#333;font-weight:400;">14</div><div class="t" style="left:11.00px;transform:translateX(-50%);top:404.00px;font-size:10px;color:#333;font-weight:400;">15</div><div class="t" style="left:11.00px;transform:translateX(-50%);top:421.00px;font-size:10px;color:#333;font-weight:400;">16</div><div class="t" style="left:11.00px;transform:translateX(-50%);top:438.00px;font-size:10px;color:#333;font-weight:400;">17</div><div class="t" style="left:11.00px;transform:translateX(-50%);top:454.00px;font-size:10px;color:#333;font-weight:400;">18</div><div class="t" style="left:11.00px;transform:translateX(-50%);top:471.00px;font-size:10px;color:#333;font-weight:400;">19</div><div class="t" style="left:11.00px;transform:translateX(-50%);top:487.00px;font-size:10px;color:#333;font-weight:400;">20</div><div class="t" style="left:11.00px;transform:translateX(-50%);top:504.00px;font-size:10px;color:#333;font-weight:400;">21</div><div class="t" style="left:11.00px;transform:translateX(-50%);top:521.00px;font-size:10px;color:#333;font-weight:400;">22</div><div class="t" style="left:24.40px;top:164.12px;font-size:16px;color:#7030a0;font-weight:700;letter-spacing:-0.36px;">Royalty Statement</div><div class="t" style="left:23.70px;top:204.00px;font-size:11.4px;color:#000;font-weight:400;">Period Ending:</div><div class="t" style="left:23.70px;top:221.00px;font-size:11.4px;color:#000;font-weight:400;">Author:</div><div class="t" style="left:143.70px;top:204.00px;font-size:11.4px;color:#000;font-weight:400;">6/30/2016</div><div class="t" style="left:143.70px;top:221.00px;font-size:11.4px;color:#000;font-weight:400;transform:scaleX(0.9);transform-origin:left center;">Jacobs</div><div class="t" style="right:816.10px;top:254.00px;font-size:11.4px;color:#7030a0;font-weight:700;transform:scaleX(0.9);transform-origin:right center;">Hardback</div><div class="t" style="right:694.90px;top:254.00px;font-size:11.4px;color:#7030a0;font-weight:700;transform:scaleX(0.915);transform-origin:right center;">Paperback</div><div class="t" style="left:23.70px;top:270.00px;font-size:11.4px;color:#000;font-weight:700;transform:scaleX(0.913);transform-origin:left center;">Units Sold</div><div class="t" style="left:23.70px;top:287.00px;font-size:11.4px;color:#000;font-weight:400;transform:scaleX(0.945);transform-origin:left center;">Gross Units Sold</div><div class="t" style="right:816.10px;top:287.00px;font-size:11.4px;color:#000;font-weight:400;transform:scaleX(0.901);transform-origin:right center;">1500</div><div class="t" style="right:694.90px;top:287.00px;font-size:11.4px;color:#000;font-weight:400;transform:scaleX(0.886);transform-origin:right center;">12492</div><div class="t" style="left:23.70px;top:304.00px;font-size:11.4px;color:#000;font-weight:400;">No. of Returns</div><div class="t" style="right:816.10px;top:304.00px;font-size:11.4px;color:#000;font-weight:400;transform:scaleX(0.879);transform-origin:right center;">324</div><div class="t" style="right:694.90px;top:304.00px;font-size:11.4px;color:#000;font-weight:400;transform:scaleX(0.879);transform-origin:right center;">200</div><div class="t" style="left:23.70px;top:320.00px;font-size:11.4px;color:#000;font-weight:400;">Percent Returned</div><div class="t" style="left:23.70px;top:353.00px;font-size:11.4px;color:#7030a0;font-weight:700;transform:scaleX(0.881);transform-origin:left center;">Pricing</div><div class="t" style="left:23.70px;top:370.00px;font-size:11.4px;color:#000;font-weight:400;">Retail Price</div><div class="t" style="left:148.50px;top:370.00px;font-size:11.4px;color:#000;font-weight:400;">$</div><div class="t" style="right:820.40px;top:370.00px;font-size:11.4px;color:#000;font-weight:400;transform:scaleX(0.905);transform-origin:right center;">25.00</div><div class="t" style="right:694.90px;top:370.00px;font-size:11.4px;color:#000;font-weight:400;transform:scaleX(0.923);transform-origin:right center;">5.95</div><div class="t" style="left:23.70px;top:387.00px;font-size:11.4px;color:#000;font-weight:400;">Price to Bookstore</div><div class="t" style="left:23.70px;top:403.00px;font-size:11.4px;color:#000;font-weight:400;transform:scaleX(0.975);transform-origin:left center;">Net Retail Sales</div><div class="t" style="left:23.70px;top:436.00px;font-size:11.4px;color:#7030a0;font-weight:700;transform:scaleX(0.951);transform-origin:left center;">Royalty Information</div><div class="t" style="left:23.70px;top:453.00px;font-size:11.4px;color:#000;font-weight:400;transform:scaleX(0.965);transform-origin:left center;">Royalty Rates</div><div class="t" style="right:816.10px;top:453.00px;font-size:11.4px;color:#000;font-weight:400;transform:scaleX(0.945);transform-origin:right center;">0.0725</div><div class="t" style="right:694.90px;top:453.00px;font-size:11.4px;color:#000;font-weight:400;transform:scaleX(0.943);transform-origin:right center;">0.1</div><div class="t" style="left:23.70px;top:470.00px;font-size:11.4px;color:#000;font-weight:400;transform:scaleX(1.025);transform-origin:left center;">Royalty to Author</div><div class="t" style="left:23.70px;top:486.00px;font-size:11.4px;color:#000;font-weight:400;">Royalty per Book</div><div style="position:absolute;left:0.00px;top:538.50px;width:1024.00px;height:23.60px;background:#e6e6e6;"></div><div style="position:absolute;left:0.00px;top:538.00px;width:1024.00px;height:1.20px;background:#c6c6c6;"></div><div style="position:absolute;left:0.00px;top:562.10px;width:1024.00px;height:1.00px;background:#c6c6c6;"></div><svg style="position:absolute;left:21px;top:546px;" width="6" height="8" viewBox="0 0 6 8"><path d="M5 0.5L1 4l4 3.5z" fill="#c0c0c0"/></svg><svg style="position:absolute;left:45px;top:546px;" width="6" height="8" viewBox="0 0 6 8"><path d="M1 0.5L5 4l-4 3.5z" fill="#c0c0c0"/></svg><div style="position:absolute;left:83.50px;top:538.00px;width:53.30px;height:21.20px;background:#fff;border-left:1px solid #c6c6c6;border-right:1px solid #c6c6c6;box-sizing:border-box;"></div><div style="position:absolute;left:83.50px;top:557.60px;width:53.30px;height:1.60px;background:#217346;"></div><div class="t" style="left:110.10px;transform:translateX(-50%);top:544.00px;font-size:10.5px;color:#217346;font-weight:700;letter-spacing:-0.3px;">Jacobs</div><svg style="position:absolute;left:164px;top:543px;" width="15" height="15" viewBox="0 0 15 15"><circle cx="7.4" cy="7.1" r="6.2" fill="none" stroke="#777" stroke-width="1"/><path d="M7.4 3.8v6.6M4.1 7.1h6.6" stroke="#777" stroke-width="1.3"/></svg><svg style="position:absolute;left:681px;top:546px;" width="3" height="9" viewBox="0 0 3 9"><rect x="0" y="0.3" width="1.5" height="1.3" fill="#999"/><rect x="0" y="3.6" width="1.5" height="1.3" fill="#999"/><rect x="0" y="6.9" width="1.5" height="1.3" fill="#999"/></svg><div style="position:absolute;left:695.40px;top:544.50px;width:340.00px;height:12.00px;background:#fff;border:1px solid #b9b9b9;box-sizing:border-box;"></div><div style="position:absolute;left:707.50px;top:544.50px;width:1.20px;height:12.00px;background:#b9b9b9;"></div><svg style="position:absolute;left:699px;top:547px;" width="6" height="7" viewBox="0 0 6 7"><path d="M4.5 0.3L1 3.5l3.5 3.2z" fill="#555"/></svg><div style="position:absolute;left:0.00px;top:563.10px;width:1024.00px;height:13.00px;background:#f0f0f0;"></div><div class="t" style="left:6.30px;top:566.36px;font-size:9px;color:#444;font-weight:400;">Ready</div><div style="position:absolute;left:893.40px;top:563.00px;width:31.60px;height:13.00px;background:#c6c6c6;"></div><svg style="position:absolute;left:903px;top:565px;" width="11" height="11" viewBox="0 0 11 11"><rect x="0.5" y="0.5" width="10" height="11" fill="#9a9a9a"/><path d="M0.5 0.5h10v11h-10zM0.5 4h10M0.5 7.5h10M4 0.5v11M7.5 0.5v11" fill="none" stroke="#555" stroke-width="1.1"/></svg><svg style="position:absolute;left:935px;top:565px;" width="12" height="11" viewBox="0 0 12 11"><path d="M0.5 0.5h11v11h-11z" fill="none" stroke="#555" stroke-width="1.1"/><path d="M3 2.5h6v7h-6z" fill="none" stroke="#777" stroke-width="1"/><path d="M4 4.8h4M4 7.2h4" stroke="#777"/></svg><svg style="position:absolute;left:966px;top:565px;" width="12" height="11" viewBox="0 0 12 11"><path d="M0.5 0.5h11v11h-11zM3.8 0.5v6.5h4v-6.5M0.5 7h3.3M0.5 9.8h11" fill="none" stroke="#555" stroke-width="1.1"/></svg><div style="position:absolute;left:992.50px;top:570.00px;width:5.00px;height:1.60px;background:#555;"></div><div style="position:absolute;left:1001.00px;top:570.50px;width:23.00px;height:1.00px;background:#999;"></div>
</body></html>
